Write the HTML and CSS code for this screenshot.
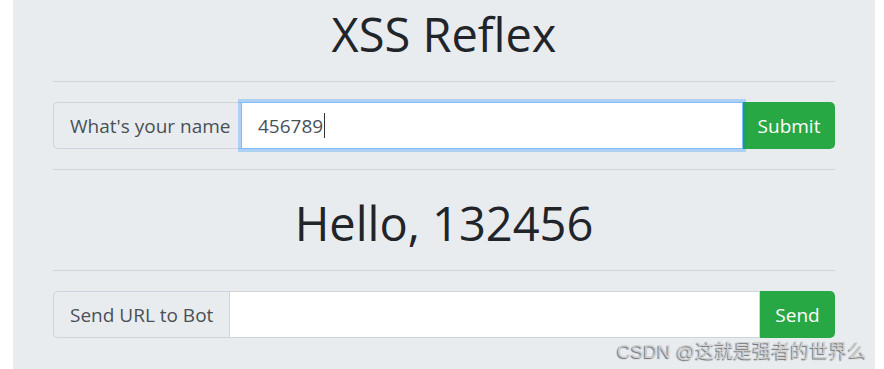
FILE: index.html
```html
<!DOCTYPE html>
<html lang="en">
<head>
<meta charset="utf-8">
<title>XSS Reflex</title>
<link rel="stylesheet" href="styles.css">
</head>
<body>
<div class="page">
  <div class="container">
    <h1 class="title">XSS Reflex</h1>
    <hr class="rule">
    <form class="group">
      <span class="addon addon-name">What's your name</span>
      <div class="field focused" role="textbox">456789<span class="caret"></span></div>
      <button type="button" class="btn btn-submit">Submit</button>
    </form>
    <hr class="rule">
    <h2 class="hello">Hello, 132456</h2>
    <hr class="rule">
    <form class="group">
      <span class="addon addon-url">Send URL to Bot</span>
      <div class="field" role="textbox"></div>
      <button type="button" class="btn btn-send">Send</button>
    </form>
  </div>
  <div class="watermark">CSDN @这就是强者的世界么</div>
</div>
</body>
</html>
```
FILE: styles.css
```css
html, body {
  margin: 0;
  padding: 0;
  background: #ffffff;
}
body {
  font-family: "Open Sans", "Noto Sans", sans-serif;
  color: #212529;
}
.page {
  position: relative;
  margin-left: 13px;
  width: 862px;
  height: 369px;
  background: #e9ecef;
  box-sizing: border-box;
  padding: 0 40px;
  overflow: hidden;
}
.container {
  display: flex;
  flex-direction: column;
}
.title, .hello {
  margin: 0;
  font-weight: 400;
  text-align: center;
  font-size: 47px;
  color: #212529;
}
.title {
  height: 81px;
  line-height: 68px;
}
.hello {
  height: 100px;
  line-height: 106px;
}
.rule {
  margin: 0;
  border: 0;
  height: 1px;
  background: #d2d5d8;
}
.group {
  display: flex;
  height: 47px;
  margin: 20px 0;
  font-size: 19px;
}
.addon {
  display: flex;
  align-items: center;
  padding: 0 15px 0 16px;
  background: #e9ecef;
  color: #495057;
  border: 1px solid #ced4da;
  border-right: 0;
  border-radius: 5px 0 0 5px;
  white-space: nowrap;
}
.addon-name { width: 188px; box-sizing: border-box; }
.addon-url { width: 176px; box-sizing: border-box; }
.field {
  flex: 1;
  display: flex;
  align-items: center;
  background: #ffffff;
  border: 1px solid #ced4da;
  padding: 0 16px;
  color: #495057;
  position: relative;
  z-index: 1;
}
.field.focused {
  border-color: #80bdff;
  box-shadow: 0 0 0 3px rgba(0, 123, 255, 0.25);
  z-index: 3;
}
.caret {
  display: inline-block;
  width: 1px;
  height: 25px;
  background: #333;
  margin-left: 1px;
}
.btn {
  border: 0;
  background: #28a745;
  color: #ffffff;
  font-family: inherit;
  font-size: 19px;
  border-radius: 0 5px 5px 0;
  padding: 0;
  cursor: pointer;
}
.btn-submit { width: 92px; }
.btn-send { width: 75px; }
.watermark {
  position: absolute;
  left: 604px;
  top: 336px;
  font-family: "Liberation Sans", "Noto Sans CJK SC", sans-serif;
  font-size: 19px;
  color: #cfcfcf;
  text-shadow: -1px 1px 1px #6e6e6e;
  white-space: nowrap;
}
```
